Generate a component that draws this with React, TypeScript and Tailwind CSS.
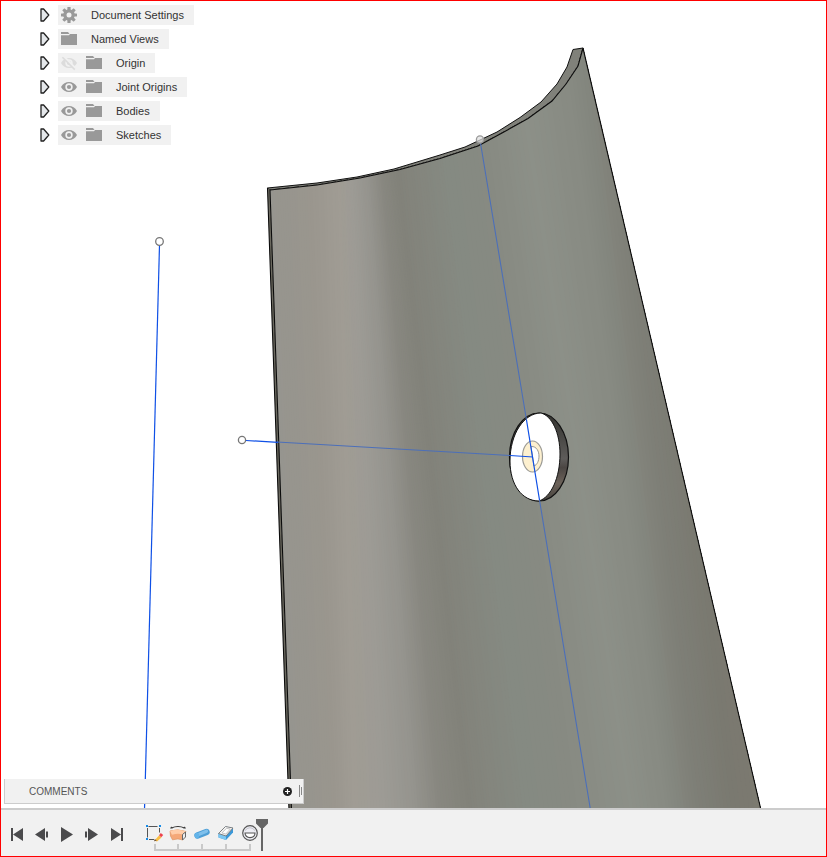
import { useState } from "react";
import type { ReactNode } from "react";

type TreeNode = { label: string; kind: "settings" | "folder"; visible?: boolean };

const treeNodes: TreeNode[] = [
  { label: "Document Settings", kind: "settings" },
  { label: "Named Views", kind: "folder" },
  { label: "Origin", kind: "folder", visible: false },
  { label: "Joint Origins", kind: "folder", visible: true },
  { label: "Bodies", kind: "folder", visible: true },
  { label: "Sketches", kind: "folder", visible: true },
];

// Shading of the curved plate: x at the upper row (y=200), x at the lower row (y=800), rgb
const shades: [number, number, [number, number, number]][] = [
  [262, 285, [150, 149, 143]],
  [285, 310, [151, 149, 142]],
  [310, 334, [154, 150, 142]],
  [338, 352, [160, 156, 148]],
  [352, 382, [157, 155, 149]],
  [368, 412, [149, 148, 142]],
  [384, 438, [136, 135, 128]],
  [399, 466, [130, 130, 122]],
  [425, 492, [132, 134, 126]],
  [450, 525, [133, 138, 130]],
  [492, 570, [135, 138, 130]],
  [536, 628, [140, 144, 136]],
  [585, 665, [135, 138, 130]],
  [622, 695, [126, 127, 119]],
  [655, 730, [122, 121, 112]],
  [680, 775, [125, 122, 112]],
];

const plateStrips = shades.slice(1).flatMap(([top, bottom, rgb], i) => {
  const [prevTop, prevBottom, prevRgb] = shades[i];
  const steps = 10;
  return Array.from({ length: steps }, (_, n) => {
    const t = n / steps;
    const a = prevTop + (top - prevTop) * t;
    const b = prevBottom + (bottom - prevBottom) * t;
    const slope = (b - a) / 600;
    const c = rgb.map((v, k) => Math.round(prevRgb[k] + (v - prevRgb[k]) * t));
    return {
      points: `${a - slope * 200},0 900,0 900,820 ${b + slope * 20},820`,
      fill: `rgb(${c.join(",")})`,
    };
  });
});

const outerCurve =
  "267.5,188 317,183 357,177 394,169 440,155 465,147 480,140 497,132 520,117.5 541,102 557,84 567,67 573,49.5 583,48";
const innerCurve =
  "583,48 578,66 566,84 552,101 528,118.5 502,133 478,146 440,158.5 400,169.5 360,178 317,185 270,190";

function Model() {
  return (
    <svg
      className="absolute inset-0 h-full w-full"
      viewBox="1 1 825 807"
      preserveAspectRatio="xMinYMin slice"
      role="img"
      aria-label="Model view"
    >
      <defs>
        <clipPath id="plate">
          <polygon points={`${innerCurve} 291.5,810 761,810`} />
        </clipPath>
        <linearGradient id="bore" x1="0" y1="0" x2="0" y2="1">
          <stop offset="0" stopColor="#34332f" />
          <stop offset="0.3" stopColor="#4b4a47" />
          <stop offset="0.52" stopColor="#5e5c5a" />
          <stop offset="0.62" stopColor="#4b4643" />
          <stop offset="0.8" stopColor="#6c625a" />
          <stop offset="1" stopColor="#45423d" />
        </linearGradient>
      </defs>

      {/* thickness of the plate along its top and left edges */}
      <polygon points={`${outerCurve} ${innerCurve}`} fill="#80817a" stroke="#111" strokeLinejoin="round" />
      <polygon points="267.5,188 270,190 291.5,810 289,810" fill="#6c6a60" />
      <g clipPath="url(#plate)">
        {plateStrips.map((strip, i) => (
          <polygon key={i} points={strip.points} fill={strip.fill} />
        ))}
      </g>
      <g fill="none" stroke="#0b0b0b" strokeWidth="1.1">
        <polyline points={innerCurve} />
        <path d="M267.5 188 L289 810 M270 190 L291.5 810 M583 48 L761 810" />
      </g>

      <ellipse cx="539" cy="457" rx="29.5" ry="44" fill="url(#bore)" stroke="#111" strokeWidth="1.2" />
      <path
        d="M541 413 C524 413 510 434 510 461 C510 485 522 501 539 501 C551 497 560 478 560 454 C560 433 552 416 541 413Z"
        fill="#fff"
        stroke="#111"
      />
      <ellipse cx="532.5" cy="456.5" rx="10" ry="15.5" fill="#fdf0cf" stroke="#9b9a95" strokeWidth="1.2" />
      <path d="M531 446.5 C537 446 539 452 539 456 C539 461 537 465 534 466Z" fill="#fff" stroke="#9b9a95" />

      <g fill="none" stroke="#4c6fb9" strokeWidth="1.1">
        <path d="M480.5 143 L526.5 420 M539.5 500 L590.5 810" />
        <path d="M277 442 L510 455.5" />
      </g>
      <g fill="none" stroke="#0f50e6" strokeWidth="1.2">
        <path d="M159.5 245 L144.5 810" />
        <path d="M246 440.5 L278 442.3 M510 455.5 L533 457" />
        <path d="M526.5 420 L532.5 457 L539.5 500" />
      </g>
      <g fill="#fff" stroke="#777" strokeWidth="1.3">
        <circle cx="159.5" cy="241.5" r="3.8" />
        <circle cx="242" cy="440" r="3.6" />
        <circle cx="480" cy="139.5" r="3.6" fill="#ddd" fillOpacity="0.7" stroke="#999" />
      </g>
    </svg>
  );
}

function GearIcon() {
  return (
    <svg className="h-4 w-4" viewBox="0 0 16 16" fill="#999" aria-hidden="true">
      {[0, 45, 90, 135].map((angle) => (
        <rect key={angle} x="6.4" y="0" width="3.2" height="16" rx="0.5" transform={`rotate(${angle} 8 8)`} />
      ))}
      <circle cx="8" cy="8" r="5.8" />
      <circle cx="8" cy="8" r="2.5" fill="#f1f1f1" />
    </svg>
  );
}

function FolderIcon() {
  return (
    <svg className="h-4 w-4" viewBox="0 0 16 16" fill="#999" aria-hidden="true">
      <path d="M0 1h7l1.500 2H0z" />
      <path d="M0 4.200h8l1-1.200h7v11H0z" />
    </svg>
  );
}

function EyeIcon({ off }: { off: boolean }) {
  const color = off ? "#dcdcdc" : "#999";
  return (
    <svg className="h-4 w-4" viewBox="0 0 16 16" aria-hidden="true">
      <path d="M0 8 C3.5 1.4 12.5 1.4 16 8 C12.5 14.6 3.5 14.6 0 8Z" fill={color} />
      <circle cx="8" cy="8" r="3.7" fill="#f1f1f1" />
      <circle cx="8" cy="8" r="2.1" fill={color} />
      {off && (
        <>
          <path d="M2.2 1.2 L14.8 13.8" stroke="#f1f1f1" strokeWidth="2.4" />
          <path d="M1.4 2.2 L13.8 14.6" stroke={color} strokeWidth="1.6" />
        </>
      )}
    </svg>
  );
}

function BrowserRow({ node }: { node: TreeNode }) {
  const [visible, setVisible] = useState(node.visible);
  return (
    <li className="flex items-center gap-2">
      <button type="button" aria-label={`Expand ${node.label}`} className="flex h-5 w-[10px] items-center">
        <svg className="h-[14px] w-[10px]" viewBox="0 0 10 14" aria-hidden="true">
          <path d="M1 1h2.6l5.2 6-5.2 6H1z" fill="#e4e7ea" stroke="#222" strokeWidth="1.3" strokeLinejoin="round" />
        </svg>
      </button>
      <div className="flex h-5 items-center gap-[9px] bg-[#f1f1f1] pr-[10px] pl-[3px]">
        {visible !== undefined && (
          <button type="button" aria-label={`Toggle ${node.label}`} onClick={() => setVisible(!visible)}>
            <EyeIcon off={!visible} />
          </button>
        )}
        {node.kind === "settings" ? <GearIcon /> : <FolderIcon />}
        <span className="pl-[5px] text-[11px] leading-5 whitespace-nowrap text-[#333]">{node.label}</span>
      </div>
    </li>
  );
}

const playback = [
  { label: "Go to beginning", path: "M6 2h2v13H6zM18 2v13L8 8.5z" },
  { label: "Step back", path: "M15 2v13L5 8.5zM16 5.5h2v6h-2z" },
  { label: "Play", path: "M6 1v15l12-7.5z" },
  { label: "Step forward", path: "M5 5.5h2v6H5zM8 2v13l10-6.5z" },
  { label: "Go to end", path: "M6 2v13l10-6.5zM16 2h2v13h-2z" },
];

const features: { label: string; icon: ReactNode }[] = [
  {
    label: "Sketch",
    icon: (
      <>
        <path d="M6.500 4.500h9M5.500 6v9.500M17.500 6v4.500M7 17.500h5" fill="none" stroke="#555" />
        <path d="M4 3h2v2H4zM17 3h2v2h-2zM4 16h2v2H4z" fill="#168be8" />
        <path d="M12.500 18.500l4.500-5 2.500 2-4.500 4z" fill="#f9bd42" />
        <path d="M12 19.200l.8-2.200 2 1.800z" fill="#735840" />
        <path d="M17 13.200l1.800-2.200 2.400 2-2 2.200z" fill="#ed424c" />
      </>
    ),
  },
  {
    label: "Thicken",
    icon: (
      <>
        <path d="M4 9 Q12 6.500 20 9.500 L17 12.500 V18 Q12 16 6.500 17.800 L4.500 14Z" fill="#f5a878" stroke="#dc915f" strokeWidth="0.7" />
        <path d="M4 9 Q12 6.500 20 9.500 L16.500 12.500 Q12 11 6 12.800Z" fill="#ffcda9" />
        <path d="M16.500 12.500l3-2.500v5l-3 3z" fill="#eee" stroke="#666" />
        <path d="M5.500 6 Q12 3 18.500 6" fill="none" stroke="#333" strokeWidth="1.1" />
        <path d="M4 6.500l1.200-2 1.600 1.800zM20 6.500l-1.200-2-1.600 1.800z" fill="#333" />
      </>
    ),
  },
  {
    label: "Pipe",
    icon: (
      <>
        <path d="M7.500 13.500L16.500 10" stroke="#4f9fd6" strokeWidth="6.400" strokeLinecap="round" />
        <path d="M8 12.700L16.500 9.200" stroke="#7fc0ec" strokeWidth="3.200" strokeLinecap="round" />
        <ellipse cx="7" cy="13.600" rx="2.200" ry="2.800" fill="#62b4ea" />
      </>
    ),
  },
  {
    label: "Shell",
    icon: (
      <>
        <path d="M4.500 11.500L11.500 4.500l7.500 1.500v4.500L12 18l-7.500-2.500z" fill="#3b98d8" />
        <path d="M4.500 11.500L12 14v4l-7.500-2.500z" fill="#7cc7f2" />
        <path d="M4.500 11.500L11.500 4.500l7.500 1.500-7 8z" fill="#f5f5f5" stroke="#777" strokeWidth="0.9" />
        <path d="M8 10.800L12.500 6.300l3.800.8-4.600 5z" fill="#fff" stroke="#aaa" strokeWidth="0.7" />
      </>
    ),
  },
  {
    label: "Joint origin",
    icon: (
      <>
        <circle cx="12" cy="11" r="7.300" fill="#eeeef4" stroke="#555" strokeWidth="1.200" />
        <path d="M7 8.800 A5.600 5.600 0 0 1 17 8.800" fill="none" stroke="#c4c4cc" />
        <path d="M7 11h10c0 2.600-2 4.600-5 4.600S7 13.600 7 11z" fill="#fff" stroke="#555" strokeWidth="1.100" />
      </>
    ),
  },
];

export default function App() {
  return (
    <div className="flex min-h-screen flex-col border border-[#ff0000] bg-white font-['Liberation_Sans',Arial,sans-serif]">
      <main className="relative flex flex-1 flex-col justify-between">
        <Model />
        <nav aria-label="Browser" className="relative pt-1 pl-[39px]">
          <ul className="flex flex-col items-start gap-1">
            {treeNodes.map((node) => (
              <BrowserRow key={node.label} node={node} />
            ))}
          </ul>
        </nav>

        <section className="relative mb-1 ml-[3px] flex h-[25px] w-[300px] items-center border-r border-b border-l border-[#ccc] bg-[#f1f1f1] pl-6">
          <h2 className="flex-1 text-[10px] text-[#555]">COMMENTS</h2>
          <button type="button" aria-label="Add comment">
            <svg className="h-[9px] w-[9px]" viewBox="0 0 9 9" aria-hidden="true">
              <circle cx="4.5" cy="4.5" r="4.5" fill="#222" />
              <path d="M4.500 2v5M2 4.500h5" stroke="#fff" strokeWidth="1.2" />
            </svg>
          </button>
          <div className="mr-px ml-[7px] flex h-full items-center gap-px">
            <span className="h-3 w-px bg-[#888]" />
            <span className="h-2 w-px bg-[#888]" />
          </div>
        </section>
      </main>

      <footer className="flex h-12 items-end border-t-2 border-[#ccc] bg-[#f1f1f1] pb-[5px] pl-1">
        <div className="mb-[5px] flex">
          {playback.map(({ label, path }) => (
            <button key={label} type="button" aria-label={label} className="flex h-6 w-[25px] items-center">
              <svg className="h-[17px] w-[25px]" viewBox="0 0 25 17" fill="#4a4a4c" aria-hidden="true">
                <path d={path} />
              </svg>
            </button>
          ))}
        </div>
        <ol className="ml-3 flex">
          {features.map(({ label, icon }, i) => (
            <li key={label} className="flex w-6 flex-col">
              <button type="button" aria-label={label} className="h-[22px] w-6">
                <svg className="h-[22px] w-6" viewBox="0 0 24 22" fill="none" aria-hidden="true">
                  {icon}
                </svg>
              </button>
              <svg className="h-[7px] w-6" viewBox="0 0 24 7" fill="none" stroke="#c9c9c9" strokeWidth="2" aria-hidden="true">
                <path d={i === 0 ? "M13 0v6h11" : i === features.length - 1 ? "M0 6h12V0" : "M0 6h24M12 6V0"} />
              </svg>
            </li>
          ))}
        </ol>
        <svg className="-ml-1.5 h-8 w-3" viewBox="0 0 12 32" fill="#666" aria-hidden="true">
          <path d="M0 0h12v4.500L7.500 9H7v23H5V9h-.5L0 4.500z" />
        </svg>
      </footer>
    </div>
  );
}
